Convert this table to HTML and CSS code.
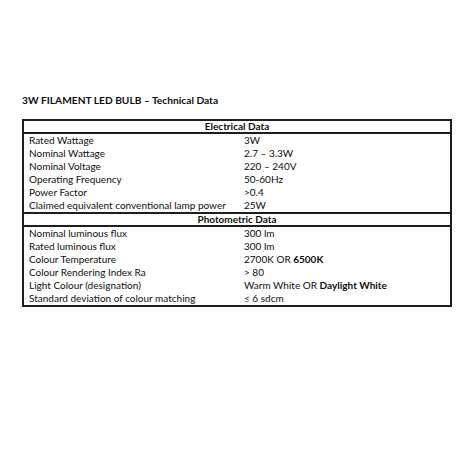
FILE: index.html
```html
<!DOCTYPE html>
<html>
<head>
<meta charset="utf-8">
<link rel="stylesheet" href="styles.css">
</head>
<body>
<div class="page">
  <h1 class="title">3W FILAMENT LED BULB – Technical Data</h1>
  <table class="spec">
    <tbody>
      <tr class="head"><th colspan="2">Electrical Data</th></tr>
      <tr class="first"><td class="lab">Rated Wattage</td><td>3W</td></tr>
      <tr><td class="lab">Nominal Wattage</td><td>2.7 – 3.3W</td></tr>
      <tr><td class="lab">Nominal Voltage</td><td>220 – 240V</td></tr>
      <tr><td class="lab">Operating Frequency</td><td>50-60Hz</td></tr>
      <tr><td class="lab">Power Factor</td><td>&gt;0.4</td></tr>
      <tr class="last"><td class="lab">Claimed equivalent conventional lamp power</td><td>25W</td></tr>
      <tr class="head"><th colspan="2">Photometric Data</th></tr>
      <tr class="first"><td class="lab">Nominal luminous flux</td><td>300 lm</td></tr>
      <tr><td class="lab">Rated luminous flux</td><td>300 lm</td></tr>
      <tr><td class="lab">Colour Temperature</td><td>2700K OR <b>6500K</b></td></tr>
      <tr><td class="lab">Colour Rendering Index Ra</td><td>&gt; 80</td></tr>
      <tr><td class="lab">Light Colour (designation)</td><td>Warm White OR <b>Daylight White</b></td></tr>
      <tr class="last"><td class="lab">Standard deviation of colour matching</td><td>≤ 6 sdcm</td></tr>
    </tbody>
  </table>
</div>
</body>
</html>
```
FILE: styles.css
```css
html, body {
  margin: 0;
  padding: 0;
  background: #ffffff;
}
.page {
  padding: 94px 22px 0 22px;
  font-family: "Lato", "Open Sans", sans-serif;
  color: #0d0d0d;
}
.title {
  margin: 0 0 13px 0;
  font-size: 10.2px;
  font-weight: 700;
  line-height: 12px;
}
.spec {
  width: 430px;
  border-collapse: collapse;
  border: 2px solid #1e1e1e;
  font-size: 10px;
}
.spec th {
  height: 11px;
  padding: 0;
  line-height: 11px;
  font-weight: 700;
  text-align: center;
  border-top: 2px solid #1e1e1e;
  border-bottom: 2px solid #1e1e1e;
}
.spec td {
  height: 13px;
  padding: 0;
  line-height: 13px;
  white-space: nowrap;
}
.spec td.lab {
  width: 215px;
  padding-left: 5px;
}
.spec b {
  font-weight: 700;
}
```
